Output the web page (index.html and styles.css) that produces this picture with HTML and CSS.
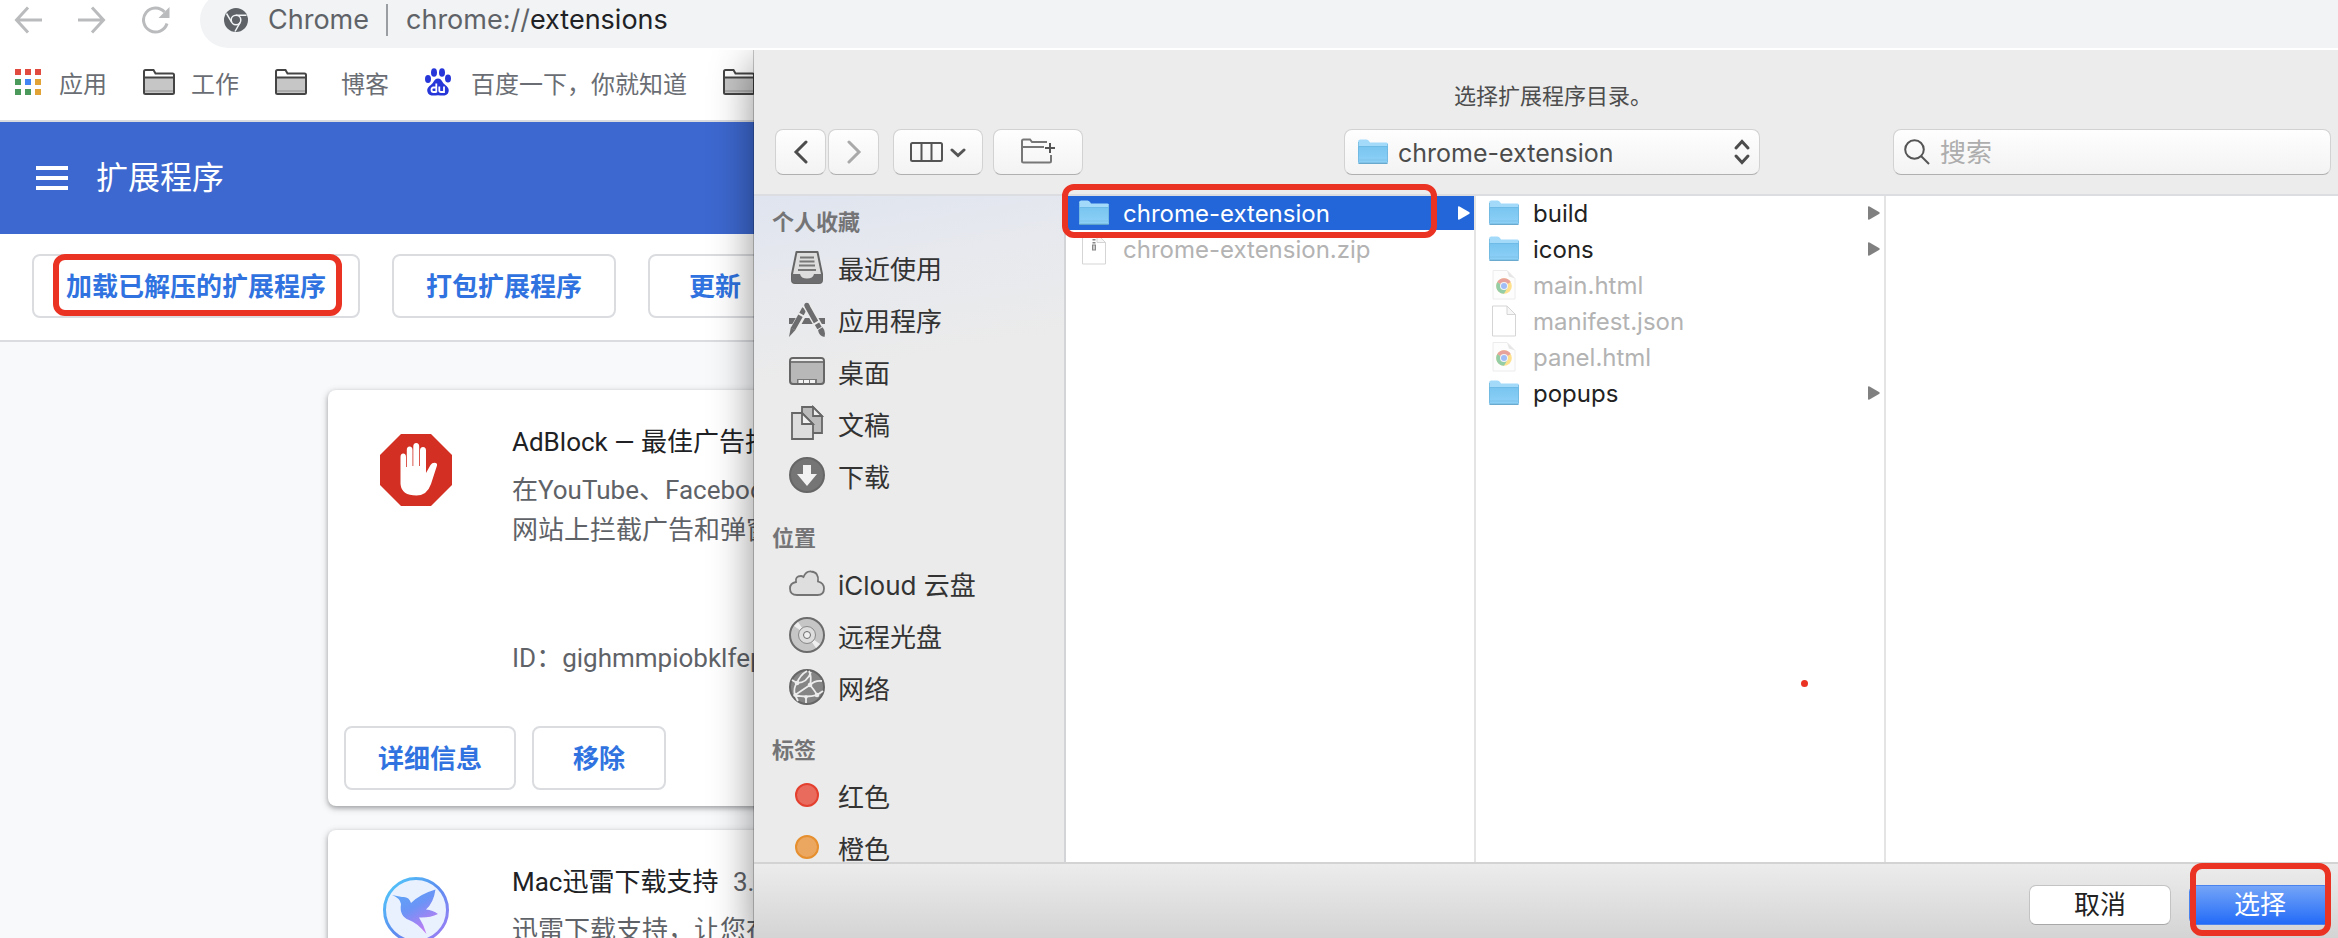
FILE: index.html
```html
<!DOCTYPE html>
<html lang="zh-CN">
<head>
<meta charset="utf-8">
<title>扩展程序</title>
<link rel="stylesheet" href="styles.css">
</head>
<body>
<svg class="defs" aria-hidden="true">
  <defs>
    <linearGradient id="folderFill" x1="0" y1="0" x2="0" y2="1"><stop offset="0" stop-color="#78c5f0"/><stop offset="1" stop-color="#8fd1f7"/></linearGradient>
    <linearGradient id="birdRing" x1="0" y1="0" x2="1" y2="1"><stop offset="0" stop-color="#4fd0fb"/><stop offset=".5" stop-color="#5b8df0"/><stop offset="1" stop-color="#a67cf5"/></linearGradient>
    <linearGradient id="birdFill" x1="0" y1="0" x2=".6" y2="1"><stop offset="0" stop-color="#58a8f8"/><stop offset=".5" stop-color="#6b94f6"/><stop offset="1" stop-color="#c07cf3"/></linearGradient>
  </defs>
  <symbol id="folder" viewBox="0 0 30 26">
    <path d="M0 3 Q0 .5 2 .5 H8.500 Q10 .5 11 2 L12 3.500 H28.500 Q30 3.500 30 5 V9 H0Z" fill="#a3dafa"/>
    <path d="M0 7.500 H30 V23 Q30 24.500 29 24.500 H1 Q0 24.500 0 23Z" fill="url(#folderFill)"/>
    <path d="M.5 3 V23 M29.500 5 V23" stroke="#69b1da" stroke-width="1" opacity=".6"/>
    <path d="M0 7.500H30" stroke="#6dbbe6" stroke-width="1"/><path d="M1 21H29" stroke="#7fc3e9" stroke-width="1"/>
    <path d="M.5 24.300H29.500" stroke="#5fa3c9" stroke-width="1.200"/>
  </symbol>
  <symbol id="bm-folder" viewBox="0 0 32 26">
    <path d="M1.500 24.500V2.500Q1.500 1.500 2.500 1.500H10.500L12.500 4.500H29.500Q30.500 4.500 30.500 5.500V24.500Z" fill="#fff"/>
    <path d="M2 9H30V24H2Z" fill="#c6c6c6"/><path d="M2 22H30" stroke="#aaa" stroke-width="2"/>
    <path d="M1 8.500H31" stroke="#444" stroke-width="2"/>
    <path d="M1 23.500V2.500Q1 1 2.500 1H10.500L12.500 4.500H29.500Q31 4.500 31 6V23.500Q31 25 29.500 25H2.500Q1 25 1 23.500Z" fill="none" stroke="#444" stroke-width="2"/>
  </symbol>
  <symbol id="page-file" viewBox="0 0 26 32">
    <path d="M1.500 1H16L24.500 9.500V31H1.500Z" fill="#fff" stroke="#d5d5d5" stroke-width="1"/>
    <path d="M16 1V9.500H24.500Z" fill="#f7f7f7" stroke="#d5d5d5" stroke-width="1"/>
  </symbol>
  <symbol id="html-file" viewBox="0 0 26 32">
    <path d="M2 1.500H16L24 9.500V30H2Z" fill="#fdfdfd" stroke="#ececec" stroke-width="1"/>
    <path d="M16 1.500L18 7.500L24 9.500Z" fill="#e6e6e6"/>
    <circle cx="13" cy="17" r="7.800" fill="#ffe08c"/>
    <path d="M13 17L6.250 13.100A7.800 7.800 0 0 0 13 24.800L16.400 18.900Z" fill="#94cda6"/>
    <path d="M13 17L6.250 13.100A7.800 7.800 0 0 1 19.750 13.100Z" fill="#e8a29c"/>
    <circle cx="13" cy="17" r="4" fill="#f4f4f4"/><circle cx="13" cy="17" r="3" fill="#a0bdf8"/>
  </symbol>
  <symbol id="zip-file" viewBox="0 0 26 32">
    <path d="M1.500 1H16L24.500 9.500V31H1.500Z" fill="#fff" stroke="#d5d5d5" stroke-width="1"/>
    <path d="M16 1V9.500H24.500Z" fill="#f7f7f7" stroke="#d5d5d5" stroke-width="1"/>
    <path d="M13 3V13" stroke="#888" stroke-width="3" stroke-dasharray="1.500 1.500"/><rect x="11.500" y="12" width="3" height="5" fill="#ccc" stroke="#888" stroke-width="1"/>
  </symbol>
</svg>

<div class="browser">
  <header class="nav-bar">
    <button class="nav-btn" aria-label="后退"><svg width="28" height="28" viewBox="0 0 28 28" fill="none" stroke="#b9bbbd" stroke-width="3"><path d="M28 14H3M14 1.500L2.500 14L14 26.500"/></svg></button>
    <button class="nav-btn" aria-label="前进"><svg width="28" height="28" viewBox="0 0 28 28" fill="none" stroke="#b9bbbd" stroke-width="3"><path d="M0 14H25M14 1.500L25.500 14L14 26.500"/></svg></button>
    <button class="nav-btn" aria-label="重新加载"><svg width="28" height="28" viewBox="0 0 28 28"><path d="M25 17.500A12 12 0 1 1 22.500 6" fill="none" stroke="#b9bbbd" stroke-width="3"/><path d="M27.500 1V12H16.500Z" fill="#b9bbbd"/></svg></button>
    <div class="omnibox">
      <svg width="24" height="24" viewBox="0 0 24 24"><circle cx="12" cy="12" r="12" fill="#5f6368"/><circle cx="12" cy="12" r="4.800" fill="none" stroke="#f1f3f4" stroke-width="1.500"/><path d="M12 7.200H22.500M7.800 14.400L2.500 5.500M16.200 14.400L11 23.500" stroke="#f1f3f4" stroke-width="1.500"/></svg>
      <span class="omni-name">Chrome</span>
      <span class="omni-url">chrome://<b>extensions</b></span>
    </div>
  </header>

  <nav class="bookmarks">
    <a href="#" class="bm bm-apps"><svg width="26" height="26" viewBox="0 0 26 26"><path d="M0 0h6v6H0zM10 0h6v6h-6zM20 0h6v6h-6z" fill="#e04a3f"/><path d="M0 10h6v6H0zM0 20h6v6H0zM10 20h6v6h-6z" fill="#4c9a5b"/><path d="M10 10h6v6h-6z" fill="#4285f4"/><path d="M20 10h6v6h-6zM20 20h6v6h-6z" fill="#e2a336"/></svg>应用</a>
    <a href="#" class="bm"><svg width="32" height="26"><use href="#bm-folder"/></svg>工作</a>
    <a href="#" class="bm bm-wide"><svg width="32" height="26"><use href="#bm-folder"/></svg>博客</a>
    <a href="#" class="bm bm-baidu"><svg width="26" height="28" viewBox="0 0 26 28" fill="#2636d9"><ellipse cx="9" cy="4.500" rx="3" ry="4.300"/><ellipse cx="17" cy="4.500" rx="3" ry="4.300"/><ellipse cx="3" cy="11" rx="3" ry="4"/><ellipse cx="23" cy="10.500" rx="3" ry="4"/><path d="M13 10.500C16.500 10.500 17 14 19.500 16.300C22.500 19 24.500 20.500 23.500 24C22.500 27.800 19 28 13 27.300C7 28 3.500 27.800 2.500 24C1.500 20.500 3.500 19 6.500 16.300C9 14 9.500 10.500 13 10.500Z"/><g fill="none" stroke="#fff" stroke-width="1.800"><path d="M11.300 15.500V24.500M11.300 19.500H8.500Q6.500 19.500 6.500 21.700Q6.500 24 8.500 24H11.300M14.300 18.500V22.500Q14.300 24 16 24H19V18.500"/></g></svg>百度一下，你就知道</a>
    <a href="#" class="bm" aria-label="文件夹"><svg width="32" height="26"><use href="#bm-folder"/></svg></a>
  </nav>

  <div class="ext-header">
    <button class="menu-btn" aria-label="菜单"><span></span><span></span><span></span></button>
    <h1>扩展程序</h1>
  </div>

  <div class="dev-bar">
    <div class="marked"><button class="btn">加载已解压的扩展程序</button><span class="mark mark-load"></span></div>
    <button class="btn">打包扩展程序</button>
    <button class="btn">更新</button>
  </div>

  <main class="cards">
    <article class="card">
      <div class="card-body">
        <svg class="ext-icon" width="72" height="72" viewBox="0 0 72 72"><path d="M21 0H51L72 21V51L51 72H21L0 51V21Z" fill="#d32f23"/><path d="M20.500 50V23Q20.500 19.500 23.200 19.500Q26 19.500 26 23V33H26.800V16Q26.800 12.500 29.600 12.500Q32.500 12.500 32.500 16V32H33.300V12.500Q33.300 9 36.200 9Q39.200 9 39.200 12.500V32H40V16.500Q40 13 43 13Q46 13 46 16.500V39L50.500 31Q52.500 28 56 29Q57.500 29.500 57 31.500L51 50Q47 61.500 36.500 61.500Q21.500 61.500 20.500 50Z" fill="#fff"/></svg>
        <div class="card-text">
          <h2>AdBlock — 最佳广告拦</h2>
          <p>在YouTube、Facebook</p>
          <p>网站上拦截广告和弹窗</p>
          <p class="ext-id">ID：gighmmpiobklfep</p>
        </div>
      </div>
      <div class="card-actions"><button class="btn">详细信息</button><button class="btn">移除</button></div>
    </article>
    <article class="card">
      <div class="card-body">
        <svg class="ext-icon" width="72" height="72" viewBox="0 0 72 72"><circle cx="36" cy="36" r="31.500" fill="#eaf1fe" stroke="url(#birdRing)" stroke-width="3"/><path d="M12 21L22 23Q29 22 31 29Q40 20 55.500 15.500Q53.500 29 46 35.500Q53 36 58 40Q50 44 39 43.500Q44 51 46.500 60Q36 48 29 46Q19 42 21 30Q20 24 12 21Z" fill="url(#birdFill)"/></svg>
        <div class="card-text">
          <h2>Mac迅雷下载支持 <span>3.</span></h2>
          <p>迅雷下载支持，让您在</p>
        </div>
      </div>
    </article>
  </main>
</div>

<section class="dialog" role="dialog" aria-labelledby="dlg-title">
  <header class="dlg-top">
    <p id="dlg-title" class="dlg-title">选择扩展程序目录。</p>
    <div class="dlg-tools">
      <div class="pair">
        <button class="tool narrow" aria-label="后退"><svg width="16" height="24" viewBox="0 0 16 24" fill="none" stroke="#4c4c4c" stroke-width="3" stroke-linecap="round"><path d="M13 2L3 12L13 22"/></svg></button>
        <button class="tool narrow" aria-label="前进"><svg width="16" height="24" viewBox="0 0 16 24" fill="none" stroke="#a9a9a9" stroke-width="3" stroke-linecap="round"><path d="M3 2L13 12L3 22"/></svg></button>
      </div>
      <button class="tool" aria-label="分栏显示"><svg width="56" height="22" viewBox="0 0 56 22" fill="none" stroke="#555" stroke-width="2"><rect x="1" y="2" width="31" height="18" rx="1.500"/><path d="M11.500 2V20M21.500 2V20"/><path d="M42 9L48 14.500L54 9" stroke-width="3" stroke-linecap="round"/></svg></button>
      <button class="tool" aria-label="新建文件夹"><svg width="36" height="28" viewBox="0 0 36 28" fill="none" stroke="#777" stroke-width="2"><path d="M27 4H12L10 1.500H3.500Q2 1.500 2 3V23Q2 24.500 3.500 24.500H29.500Q31 24.500 31 23V17M2 9H24"/><path d="M30 5V15M25 10H35" stroke="#555"/></svg></button>
      <span class="grow-left"></span>
      <label class="popup">
        <svg width="30" height="26"><use href="#folder"/></svg>
        <select aria-label="位置"><option>chrome-extension</option></select>
        <svg width="18" height="26" viewBox="0 0 18 26" fill="none" stroke="#4c4c4c" stroke-width="3" stroke-linecap="round"><path d="M3 9L9 2.500L15 9M3 17L9 23.500L15 17"/></svg>
      </label>
      <span class="grow-right"></span>
      <label class="search">
        <svg width="26" height="26" viewBox="0 0 26 26" fill="none" stroke="#555" stroke-width="2"><circle cx="10.500" cy="10.500" r="9.300"/><path d="M17 17L25 25"/></svg>
        <input type="search" placeholder="搜索" aria-label="搜索">
      </label>
    </div>
  </header>

  <div class="dlg-main">
    <aside class="sidebar">
      <h3>个人收藏</h3>
      <ul>
        <li><svg width="36" height="36" viewBox="0 0 36 36"><path d="M7.500 3H28.500L33 25V31Q33 34 30 34H6Q3 34 3 31V25Z" fill="#ddd" stroke="#666" stroke-width="2" stroke-linejoin="round"/><path d="M3 25H11Q12 29.500 18 29.500Q24 29.500 25 25H33V31Q33 34 30 34H6Q3 34 3 31Z" fill="#6d6d6f"/><path d="M11 8.500H25M10.500 12.500H25.500M10 16.500H26M9 21H27" stroke="#777" stroke-width="1.800"/></svg>最近使用</li>
        <li><svg width="36" height="36" viewBox="0 0 36 36"><path d="M0 17H36V23H0Z" fill="#6c6c6e"/><path d="M17 7L4 30" stroke="#ebebeb" stroke-width="8"/><path d="M15.500 7.500L12.500 13M11.500 14.800L4 28" stroke="#6c6c6e" stroke-width="5"/><path d="M1.800 26.500L6.200 29.200L0 36Z" fill="#6c6c6e"/><path d="M17.500 4L30 26" stroke="#ebebeb" stroke-width="8"/><path d="M18 5L27 21M28 22.800L30.500 27" stroke="#6c6c6e" stroke-width="5"/><circle cx="17.800" cy="4.300" r="2.500" fill="#6c6c6e"/><path d="M29 29L33.500 26.300Q37 30 35.500 36Q30 35 29 29Z" fill="#6c6c6e"/></svg>应用程序</li>
        <li><svg width="36" height="36" viewBox="0 0 36 36"><rect x="1" y="5" width="34" height="26" rx="3" fill="#b8b8b8" stroke="#666" stroke-width="2"/><path d="M2 8Q2 6 4 6H32Q34 6 34 8H2Z" fill="#eee"/><path d="M2 9H34" stroke="#666" stroke-width="1.500"/><path d="M8 26H28V30H8Z" fill="#777"/><path d="M9.500 27H14V30H9.500ZM15 27H20V30H15ZM21 27H26V30H21Z" fill="#f2f2f2"/></svg>桌面</li>
        <li><svg width="36" height="36" viewBox="0 0 36 36" stroke="#666" stroke-width="1.800"><path d="M13 2H24L33 11V28H13Z" fill="#bbb"/><path d="M24 2V11H33Z" fill="#eee"/><path d="M3 8H13L24 19V34H3Z" fill="#ddd"/><path d="M13 8V19H24Z" fill="#f0f0f0"/></svg>文稿</li>
        <li><svg width="36" height="36" viewBox="0 0 36 36"><circle cx="18" cy="18" r="17" fill="#757575" stroke="#666" stroke-width="2"/><path d="M14 8H22V17H28L18 29L8 17H14Z" fill="#f2f2f2"/></svg>下载</li>
      </ul>
      <h3>位置</h3>
      <ul>
        <li><svg width="36" height="36" viewBox="0 0 36 36"><path d="M8 30Q1 30 1 23.500Q1 18 7 17Q6 11 12 11Q13 11 14.500 12Q17 6 22 6.500Q30 7 29 16.500Q35 18 35 23.500Q35 30 28.500 30Z" fill="#dedede" stroke="#737373" stroke-width="1.800"/></svg>iCloud 云盘</li>
        <li><svg width="36" height="36" viewBox="0 0 36 36" fill="none" stroke="#6c6c6c"><circle cx="18" cy="18" r="17" fill="#c6c6c6" stroke-width="2"/><path d="M18 18L5 9L9 5ZM18 18L31 27L27 31Z" fill="#efefef" stroke="none"/><circle cx="18" cy="18" r="8.500" fill="#ddd" stroke="#888"/><circle cx="18" cy="18" r="3.500" fill="#eee"/></svg>远程光盘</li>
        <li><svg width="36" height="36" viewBox="0 0 36 36"><circle cx="18" cy="18" r="17" fill="#858585" stroke="#666" stroke-width="2"/><g fill="none" stroke="#ececec" stroke-width="1.800"><path d="M8 14Q11 6 18 2M8 14Q18 14 22 3M8 14L3 11M8 14Q4 19 6 26Q17 29 28 26M21 16Q26 11 33 12M21 16Q23 8 20 2M21 16Q15 20 6 26M21 16Q26 22 28 26M28 26L34 22M17 28V34M6 26L9 32"/></g><g fill="#ececec"><circle cx="8" cy="14" r="2.300"/><circle cx="21" cy="16" r="2.300"/><circle cx="28" cy="26" r="2.300"/><circle cx="17" cy="28" r="1.800"/><circle cx="6" cy="26" r="1.800"/></g></svg>网络</li>
      </ul>
      <h3>标签</h3>
      <ul>
        <li><i class="tag red"></i>红色</li>
        <li><i class="tag orange"></i>橙色</li>
      </ul>
    </aside>

    <div class="col">
      <div class="marked"><div class="row selected"><svg width="30" height="26"><use href="#folder"/></svg>chrome-extension<svg class="arrow" width="12" height="14" viewBox="0 0 12 14"><path d="M0 1Q0 0 1.500 .5L11 6Q12.500 7 11 8L1.500 13.500Q0 14 0 13Z"/></svg></div><span class="mark mark-folder"></span></div>
      <div class="row dim"><svg width="30" height="32"><use href="#zip-file"/></svg>chrome-extension.zip</div>
    </div>
    <div class="col">
      <div class="row"><svg width="30" height="26"><use href="#folder"/></svg>build<svg class="arrow" width="12" height="14" viewBox="0 0 12 14"><path d="M0 1Q0 0 1.500 .5L11 6Q12.500 7 11 8L1.500 13.500Q0 14 0 13Z"/></svg></div>
      <div class="row"><svg width="30" height="26"><use href="#folder"/></svg>icons<svg class="arrow" width="12" height="14" viewBox="0 0 12 14"><path d="M0 1Q0 0 1.500 .5L11 6Q12.500 7 11 8L1.500 13.500Q0 14 0 13Z"/></svg></div>
      <div class="row dim"><svg width="30" height="32"><use href="#html-file"/></svg>main.html</div>
      <div class="row dim"><svg width="30" height="32"><use href="#page-file"/></svg>manifest.json</div>
      <div class="row dim"><svg width="30" height="32"><use href="#html-file"/></svg>panel.html</div>
      <div class="row"><svg width="30" height="26"><use href="#folder"/></svg>popups<svg class="arrow" width="12" height="14" viewBox="0 0 12 14"><path d="M0 1Q0 0 1.500 .5L11 6Q12.500 7 11 8L1.500 13.500Q0 14 0 13Z"/></svg></div>
      <span class="dot"></span>
    </div>
    <div class="col last"></div>
  </div>

  <footer class="dlg-foot">
    <button class="mac-btn">取消</button>
    <div class="marked"><button class="mac-btn primary">选择</button><span class="mark mark-choose"></span></div>
  </footer>
</section>
</body>
</html>
```

FILE: styles.css
```css
* { box-sizing: border-box; }

body {
  margin: 0;
  height: 100vh;
  overflow: hidden;
  position: relative;
  font-family: Inter, "Noto Sans CJK SC", sans-serif;
  font-size: 26px;
  color: #202124;
}

h1, h2, h3, p, ul { margin: 0; padding: 0; font-weight: 400; }
ul { list-style: none; }
svg { display: block; flex: none; }
button { font-family: inherit; font-size: 26px; cursor: pointer; }
.defs { position: absolute; width: 0; height: 0; }

/* Browser chrome */
.nav-bar {
  display: flex;
  align-items: center;
  gap: 36px;
  height: 50px;
  padding: 0 0 10px 14px;
  background: #fff;
  font-family: Inter, "Noto Sans CJK SC", sans-serif;
  font-size: 27px;
}
.nav-btn { border: 0; padding: 0; background: none; }
.omnibox {
  flex: 1;
  display: flex;
  align-items: center;
  height: 56px;
  margin-left: -6px;
  padding-left: 24px;
  border-radius: 28px 0 0 28px;
  background: #f1f3f4;
  color: #5f6368;
  line-height: 32px;
}
.omni-name { margin-left: 20px; padding-right: 17px; border-right: 2px solid #9a9da1; }
.omni-url { margin-left: 18px; }
.omni-url b { font-weight: 400; color: #202124; }

.bookmarks {
  display: flex;
  align-items: center;
  gap: 36px;
  height: 72px;
  padding: 0 0 6px 15px;
  border-bottom: 2px solid #d9dbde;
  background: #fff;
  overflow: hidden;
}
.bm {
  display: flex;
  align-items: center;
  flex: none;
  gap: 16px;
  color: #6a6e74;
  font-size: 24px;
  text-decoration: none;
}
.bm-apps { gap: 18px; }
.bm-wide { gap: 34px; }
.bm-baidu { gap: 20px; }

/* Extensions page */
.browser {
  height: 100%;
  overflow: hidden;
  background: #f8f9fb;
  font-family: Roboto, "Noto Sans CJK SC", sans-serif;
}
.ext-header {
  display: flex;
  align-items: center;
  gap: 28px;
  height: 112px;
  padding-left: 36px;
  background: #3d68cf;
  color: #fff;
}
.ext-header h1 { font-size: 32px; line-height: 48px; }
.menu-btn { display: grid; gap: 6px; width: 32px; padding: 0; border: 0; background: none; }
.menu-btn span { height: 4px; background: #fff; }

.dev-bar {
  display: flex;
  gap: 32px;
  padding: 20px 32px 22px;
  border-bottom: 2px solid #dadce0;
  background: #fff;
}
.btn {
  height: 64px;
  min-width: 134px;
  padding: 0 32px 4px;
  border: 2px solid #dadce0;
  border-radius: 8px;
  background: #fff;
  color: #3073e0;
  font-weight: 700;
  white-space: nowrap;
}
.marked { position: relative; }
.mark { position: absolute; border: 6px solid #eb3323; border-radius: 12px; pointer-events: none; }
.mark-load { inset: 0 18px 2px 21px; }

.cards { display: grid; gap: 24px; padding: 48px 0 0 328px; }
.card {
  width: 800px;
  min-height: 416px;
  display: flex;
  flex-direction: column;
  border-radius: 8px;
  background: #fff;
  box-shadow: 0 2px 4px rgba(60, 64, 67, .35), 0 2px 6px 2px rgba(60, 64, 67, .15);
}
.card-body { flex: 1; display: flex; gap: 60px; padding: 32px 0 0 52px; }
.ext-icon { margin-top: 12px; }
.card-text { color: #5f6368; line-height: 40px; white-space: nowrap; }
.card-text h2 { margin-bottom: 8px; color: #202124; font-size: 26px; }
.card-text h2 span { margin-left: 8px; color: #5f6368; }
.ext-id { margin-top: 88px; }
.card-actions { display: flex; gap: 16px; padding: 16px; }

/* Directory dialog */
.dialog {
  position: absolute;
  inset: 50px 0 0 754px;
  display: flex;
  flex-direction: column;
  background: #ececec;
  box-shadow: 0 12px 40px rgba(0, 0, 0, .45), 0 0 0 1px rgba(0, 0, 0, .2);
  clip-path: inset(0 0 0 -60px);
  color: #222;
}
.dlg-top { padding: 30px 7px 19px 21px; border-bottom: 2px solid #dcdde0; }
.dlg-title { margin-bottom: 17px; color: #4d4d4d; font-size: 22px; line-height: 32px; text-align: center; }
.dlg-tools { display: flex; gap: 10px; }
.pair { display: flex; gap: 2px; margin-right: 4px; }
.tool, .popup, .search {
  display: flex;
  align-items: center;
  height: 46px;
  border: 1px solid #d2d2d2;
  border-bottom-color: #b0b0b0;
  border-radius: 8px;
  background: linear-gradient(#fefefe, #f3f3f3);
}
.tool { justify-content: center; width: 90px; padding: 0; }
.tool.narrow { width: 51px; }
.grow-left { flex: 32; }
.grow-right { flex: 15; }
.popup { width: 416px; padding: 0 8px 0 13px; gap: 10px; }
.popup select {
  flex: 1;
  appearance: none;
  border: 0;
  padding: 2px 0 0;
  background: none;
  color: #4c4c4c;
  font: 25px/40px Inter, "Noto Sans CJK SC", sans-serif;
}
.search { width: 438px; padding: 0 10px; gap: 10px; }
.search input {
  flex: 1;
  min-width: 0;
  border: 0;
  padding: 2px 0 0;
  background: none;
  font: 26px/40px Inter, "Noto Sans CJK SC", sans-serif;
}
.search input::placeholder { color: #adadad; }

.dlg-main { flex: 1; min-height: 0; display: flex; background: #fff; }
.sidebar {
  width: 312px;
  padding: 6px 0 0 18px;
  overflow: hidden;
  border-right: 2px solid #d3d4d7;
  background: linear-gradient(170deg, #dfe4ef, #e7e9ee 90px, #ebebeb 190px);
}
.sidebar h3 { color: #747476; font-size: 22px; font-weight: 700; line-height: 40px; }
.sidebar ul + h3 { margin-top: 16px; }
.sidebar li { display: flex; align-items: center; gap: 13px; height: 52px; padding: 0 0 2px 17px; color: #333; }
.tag { width: 24px; height: 24px; margin: 0 6px; border: 2px solid; border-radius: 50%; }
.tag.red { border-color: #e4402f; background: #e86b5e; }
.tag.orange { border-color: #e68f2f; background: #eba660; }

.col { position: relative; width: 410px; display: flex; flex-direction: column; gap: 2px; border-right: 2px solid #e4e4e4; }
.col.last { flex: 1; border-right: 0; }
.row { display: flex; align-items: center; gap: 14px; height: 34px; padding: 0 4px 0 13px; font-size: 24px; }
.row.dim { color: #b3b3b3; }
.row.selected { background: #2266da; color: #fff; }
.arrow { margin-left: auto; fill: #808080; }
.selected .arrow { fill: #fff; }
.mark-folder { inset: -12px 37px -8px -4px; z-index: 1; }
.dot { position: absolute; left: 325px; top: 484px; width: 7px; height: 7px; border-radius: 50%; background: #eb3323; }

.dlg-foot {
  display: flex;
  justify-content: flex-end;
  align-items: flex-start;
  gap: 18px;
  height: 76px;
  padding: 21px 7px 0;
  border-top: 2px solid #d3d3d3;
  background: linear-gradient(#ececec, #d4d4d4);
}
.mac-btn {
  display: block;
  width: 142px;
  height: 40px;
  padding: 0;
  border: 1px solid #c3c3c3;
  border-bottom-color: #a8a8a8;
  border-radius: 7px;
  background: #fff;
  color: #222;
  line-height: 38px;
}
.mac-btn.primary { border-color: #4a83ee; background: linear-gradient(#74a4f7, #236bf8); color: #fff; }
.mark-choose { inset: -22px 0 -11px 1px; }
```
